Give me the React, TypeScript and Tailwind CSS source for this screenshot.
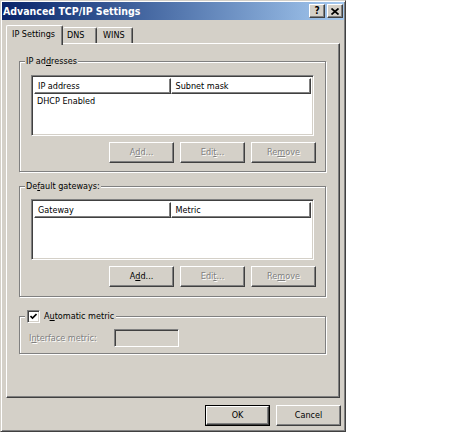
import React from "react";

const font =
  "font-['DejaVu_Sans_Condensed','DejaVu_Sans','Liberation_Sans',sans-serif] [font-stretch:condensed]";

// win classic 3D edges
const raised =
  "border border-t-white border-l-white border-r-[#404040] border-b-[#404040] shadow-[inset_-1px_-1px_0_#808080]";
const sunken =
  "border border-t-[#808080] border-l-[#808080] border-r-white border-b-white shadow-[inset_1px_1px_0_#404040,inset_-1px_-1px_0_#d4d0c8]";
const etched =
  "border border-[#808080] shadow-[inset_1px_1px_0_#fff,1px_1px_0_#fff]";
const grayText = "text-[#808080] [text-shadow:1px_1px_0_#fff]";

function L({ t, u }: { t: string; u?: number }) {
  if (u === undefined) return <>{t}</>;
  return (
    <>
      {t.slice(0, u)}
      <span className="underline">{t[u]}</span>
      {t.slice(u + 1)}
    </>
  );
}

function Btn({
  t,
  u,
  off,
  def,
}: {
  t: string;
  u?: number;
  off?: boolean;
  def?: boolean;
}) {
  const inner = (
    <div
      className={`${raised} h-full w-full flex items-center justify-center ${
        off ? grayText : "text-black"
      }`}
    >
      <L t={t} u={u} />
    </div>
  );
  if (def)
    return <div className="w-[65px] h-[21px] border border-black">{inner}</div>;
  return <div className="w-[65px] h-[21px]">{inner}</div>;
}

function Group({
  legend,
  h,
  children,
}: {
  legend: React.ReactNode;
  h: string;
  children: React.ReactNode;
}) {
  return (
    <div className={`relative w-[307px] ${h} ${etched}`}>
      <div className="absolute -top-[7px] left-[5px] px-[1px] bg-[#d4d0c8] flex items-center h-[13px]">
        {legend}
      </div>
      {children}
    </div>
  );
}

function ListView({ cols, rows }: { cols: string[]; rows: string[] }) {
  return (
    <div className={`${sunken} bg-white w-[283px] h-[61px] p-[2px] overflow-hidden`}>
      <div className="flex h-[16px]">
        <div className={`${raised} w-[138px] pl-[3px] flex items-center`}>
          {cols[0]}
        </div>
        <div className={`${raised} w-[142px] pl-[4px] flex items-center`}>
          {cols[1]}
        </div>
      </div>
      {rows.map((r) => (
        <div key={r} className="pl-[3px] pt-[3px]">
          {r}
        </div>
      ))}
    </div>
  );
}

export default function App() {
  return (
    <div className={`w-[474px] h-[434px] bg-white text-[9px] leading-none ${font}`}>
      <div className="w-[346px] h-[432px] bg-[#d4d0c8] border border-t-[#d4d0c8] border-l-[#d4d0c8] border-r-[#404040] border-b-[#404040] shadow-[inset_1px_1px_0_#fff,inset_-1px_-1px_0_#808080] p-[1px] flex flex-col">
        {/* title bar */}
        <div className="h-[18px] bg-linear-to-r from-[#0a246a] to-[#a6caf0] flex items-center pl-[1px] pr-[1px]">
          <span className="text-white font-bold text-[10.5px] flex-1">
            Advanced TCP/IP Settings
          </span>
          <div className="flex gap-[2px]">
            <div className={`${raised} bg-[#d4d0c8] w-[16px] h-[14px] flex items-center justify-center font-bold text-[10px] text-black`}>
              ?
            </div>
            <div className={`${raised} bg-[#d4d0c8] w-[16px] h-[14px] flex items-center justify-center`}>
              <svg width="8" height="7" viewBox="0 0 8 7">
                <path d="M0.5 0.5 L7.5 6.5 M7.5 0.5 L0.5 6.5" stroke="#000" strokeWidth="1.7" />
              </svg>
            </div>
          </div>
        </div>

        {/* tabs */}
        <div className="flex items-end h-[18px] mt-[5px] pl-[4px] relative z-10">
          <div className="w-[57px] h-[20px] -mb-[2px] border border-t-white border-l-white border-r-[#404040] border-b-0 shadow-[inset_-1px_0_0_#808080] rounded-t-[2px] bg-[#d4d0c8] flex items-start pt-[4px] pl-[5px]">
            IP Settings
          </div>
          <div className="w-[34px] h-[16px] border border-t-white border-l-0 border-r-[#404040] border-b-0 shadow-[inset_-1px_0_0_#808080] rounded-t-[2px] flex items-center pl-[4px]">
            DNS
          </div>
          <div className="w-[36px] h-[16px] border border-t-white border-l-0 border-r-[#404040] border-b-0 shadow-[inset_-1px_0_0_#808080] rounded-t-[2px] flex items-center pl-[6px]">
            WINS
          </div>
        </div>

        {/* tab panel */}
        <div className={`ml-[4px] w-[334px] h-[355px] ${raised} pl-[12px] pt-[17px]`}>
          <Group legend={<L t="IP addresses" u={5} />} h="h-[111px]">
            <div className="pl-[11px] pt-[13px]">
              <ListView cols={["IP address", "Subnet mask"]} rows={["DHCP Enabled"]} />
              <div className="flex justify-end gap-[6px] mt-[6px] w-[285px]">
                <Btn t="Add..." u={1} off />
                <Btn t="Edit..." u={3} off />
                <Btn t="Remove" u={2} off />
              </div>
            </div>
          </Group>

          <div className="mt-[14px]">
            <Group legend={<L t="Default gateways:" u={2} />} h="h-[111px]">
              <div className="pl-[11px] pt-[12px]">
                <ListView cols={["Gateway", "Metric"]} rows={[]} />
                <div className="flex justify-end gap-[6px] mt-[6px] w-[285px]">
                  <Btn t="Add..." u={1} />
                  <Btn t="Edit..." u={3} off />
                  <Btn t="Remove" u={2} off />
                </div>
              </div>
            </Group>
          </div>

          <div className="mt-[19px]">
            <Group
              h="h-[38px]"
              legend={
                <div className="flex items-center gap-[4px] pl-[1px] pr-[1px]">
                  <div className={`${sunken} bg-white w-[13px] h-[13px] flex items-center justify-center`}>
                    <svg width="7" height="7" viewBox="0 0 7 7">
                      <path d="M0.5 3 L2.5 5 L6.5 1" stroke="#000" strokeWidth="1.6" fill="none" />
                    </svg>
                  </div>
                  <span>
                    <L t="Automatic metric" u={1} />
                  </span>
                </div>
              }
            >
              <div className="flex items-center pl-[9px] pt-[12px]">
                <span className={`w-[85px] ${grayText}`}>
                  <L t="Interface metric:" u={1} />
                </span>
                <div className={`${sunken} w-[65px] h-[18px] bg-[#d4d0c8]`} />
              </div>
            </Group>
          </div>
        </div>

        {/* dialog buttons */}
        <div className="flex justify-end gap-[6px] mt-[7px] pr-[3px]">
          <Btn t="OK" def />
          <Btn t="Cancel" />
        </div>
      </div>
    </div>
  );
}
